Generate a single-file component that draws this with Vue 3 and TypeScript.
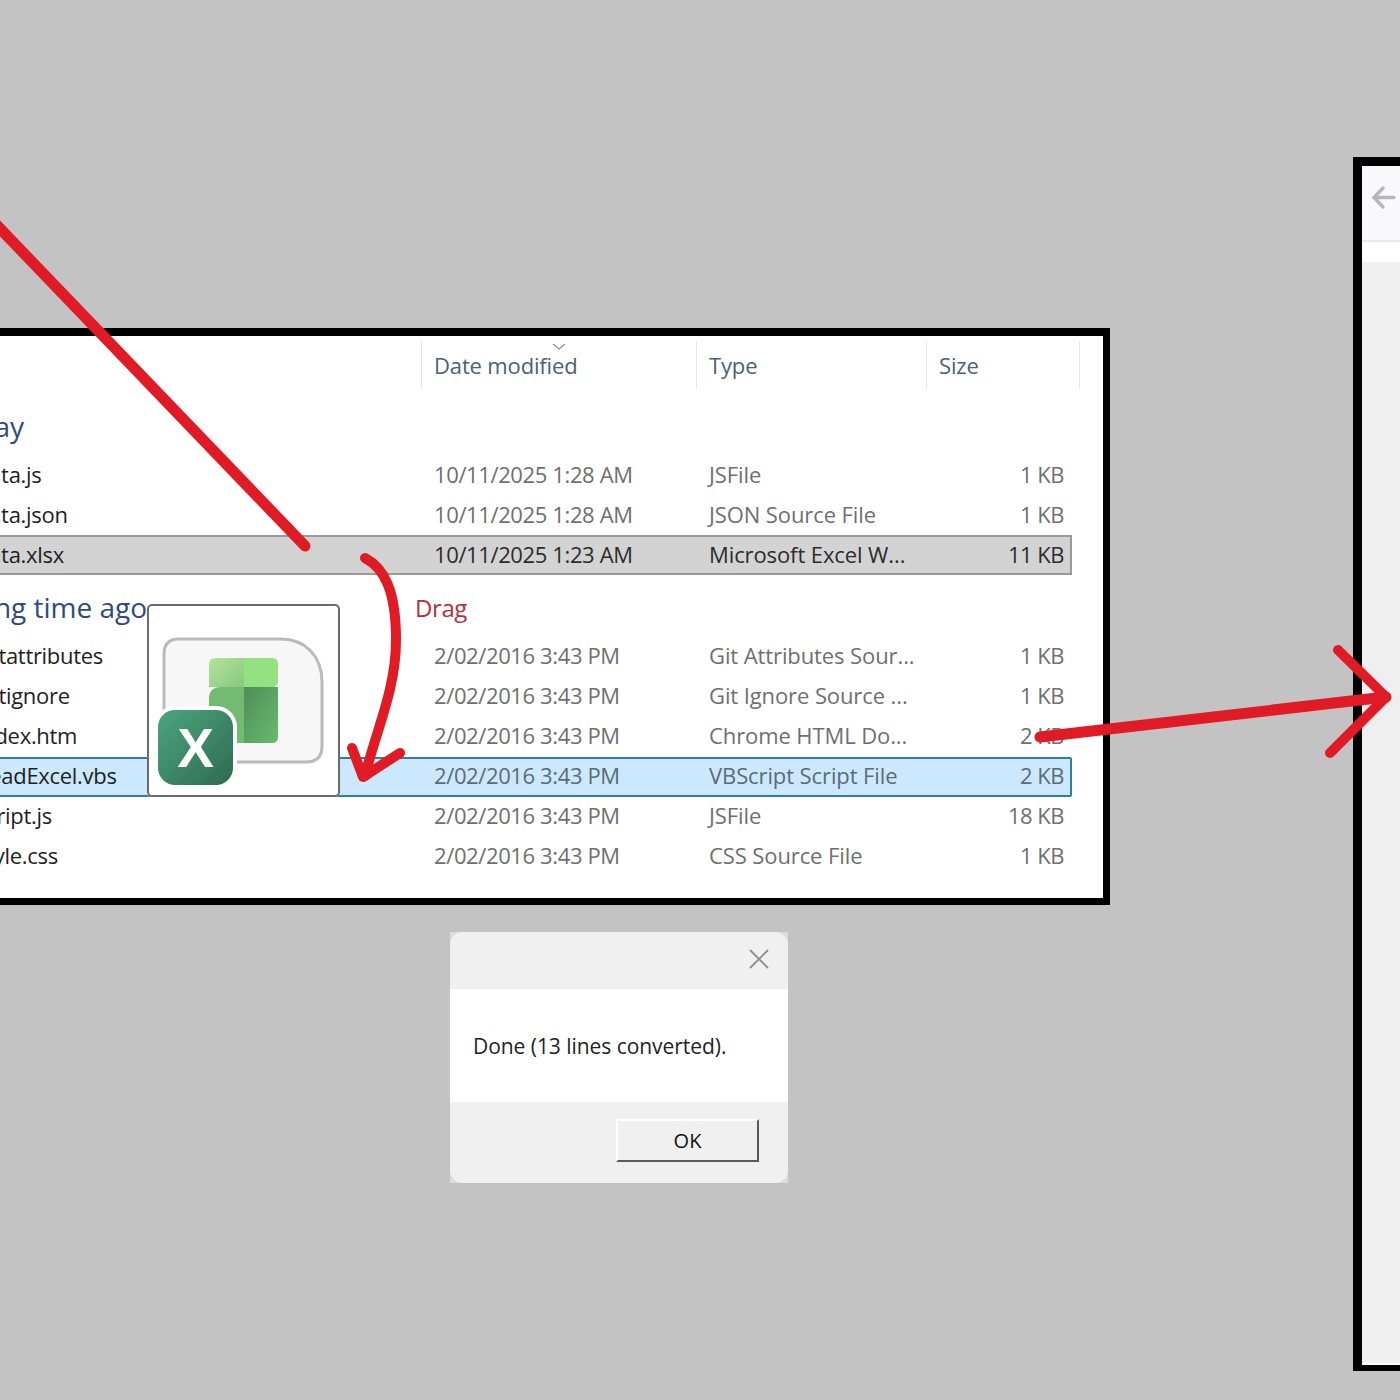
<script setup lang="ts">
interface FileRow {
  name: string
  date: string
  type: string
  size: string
  state?: 'grey' | 'blue'
}

interface FileGroup {
  title: string
  rows: FileRow[]
}

const groups: FileGroup[] = [
  {
    title: 'Today',
    rows: [
      { name: 'data.js', date: '10/11/2025 1:28 AM', type: 'JSFile', size: '1 KB' },
      { name: 'data.json', date: '10/11/2025 1:28 AM', type: 'JSON Source File', size: '1 KB' },
      { name: 'data.xlsx', date: '10/11/2025 1:23 AM', type: 'Microsoft Excel W...', size: '11 KB', state: 'grey' },
    ],
  },
  {
    title: 'A long time ago',
    rows: [
      { name: '.gitattributes', date: '2/02/2016 3:43 PM', type: 'Git Attributes Sour...', size: '1 KB' },
      { name: '.gitignore', date: '2/02/2016 3:43 PM', type: 'Git Ignore Source ...', size: '1 KB' },
      { name: 'index.htm', date: '2/02/2016 3:43 PM', type: 'Chrome HTML Do...', size: '2 KB' },
      { name: 'ReadExcel.vbs', date: '2/02/2016 3:43 PM', type: 'VBScript Script File', size: '2 KB', state: 'blue' },
      { name: 'script.js', date: '2/02/2016 3:43 PM', type: 'JSFile', size: '18 KB' },
      { name: 'style.css', date: '2/02/2016 3:43 PM', type: 'CSS Source File', size: '1 KB' },
    ],
  },
]
</script>

<template>
  <div class="stage">
    <!-- explorer window, runs off the left edge -->
    <div class="explorer">
      <div class="head">
        <div class="head-cell first"></div>
        <div class="head-cell date">
          Date modified
          <svg class="chevron" width="14" height="7" viewBox="0 0 14 7">
            <path d="M1 1 L7 6 L13 1" fill="none" stroke="#8a8f98" stroke-width="1.2" />
          </svg>
        </div>
        <div class="head-cell type">Type</div>
        <div class="head-cell size">Size</div>
      </div>
      <div class="list">
        <section v-for="g in groups" :key="g.title" class="group">
          <h3 class="group-title">{{ g.title }}</h3>
          <div
            v-for="r in g.rows"
            :key="r.name"
            class="row"
            :class="r.state"
          >
            <span class="name">{{ r.name }}</span>
            <span class="meta date-col">{{ r.date }}</span>
            <span class="meta type-col">{{ r.type }}</span>
            <span class="meta right">{{ r.size }}</span>
          </div>
        </section>
      </div>
    </div>

    <!-- drag ghost -->
    <div class="ghost">
      <svg width="193" height="193" viewBox="0 0 193 193">
        <defs>
          <linearGradient id="sheetA" x1="0" y1="0" x2="1" y2="1">
            <stop offset="0" stop-color="#b4e49a" />
            <stop offset="1" stop-color="#86c97c" />
          </linearGradient>
          <linearGradient id="sheetB" x1="0" y1="0" x2="1" y2="1">
            <stop offset="0" stop-color="#4f8d5a" />
            <stop offset="1" stop-color="#69bb6e" />
          </linearGradient>
          <linearGradient id="badge" x1="0" y1="0" x2="1" y2="1">
            <stop offset="0" stop-color="#4aa67f" />
            <stop offset="1" stop-color="#2f6a50" />
          </linearGradient>
        </defs>
        <path
          d="M32 35 H134 C158 35 175 52 175 78 V142 Q175 158 159 158 H32 Q17 158 17 143 V50 Q17 35 32 35 Z"
          fill="#f7f7f7"
          stroke="#bababa"
          stroke-width="3"
        />
        <path d="M62 60 Q62 54 68 54 H97 V83 H62 Z" fill="url(#sheetA)" />
        <path d="M97 54 H125 Q131 54 131 60 V77 Q131 83 125 83 H97 Z" fill="#93e27f" />
        <path d="M62 95 Q62 83 74 83 H97 V139 H62 Z" fill="#72bb70" />
        <path d="M97 83 H131 V133 Q131 139 125 139 H97 Z" fill="url(#sheetB)" />
        <rect x="7" y="102" width="83" height="83" rx="21" fill="#fff" />
        <rect x="11" y="106" width="75" height="75" rx="17" fill="url(#badge)" />
        <text x="48.5" y="163" text-anchor="middle" class="badge-x">X</text>
      </svg>
    </div>

    <div class="drag-label">Drag</div>

    <!-- message box -->
    <div class="dialog">
      <div class="dialog-inner">
        <div class="dialog-top">
          <svg width="22" height="22" viewBox="0 0 22 22">
            <path d="M2 2 L20 20 M20 2 L2 20" stroke="#8e8e8e" stroke-width="1.8" fill="none" />
          </svg>
        </div>
        <div class="dialog-body">Done (13 lines converted).</div>
        <div class="dialog-foot">
          <button class="ok">OK</button>
        </div>
      </div>
    </div>

    <!-- second window, cut by the right edge -->
    <div class="browser">
      <div class="browser-bar">
        <svg width="25" height="25" viewBox="0 0 25 25">
          <path d="M23 12.5 H3.5 M12 3 L3 12.5 L12 22" fill="none" stroke="#b5b5ba" stroke-width="3.4" stroke-linecap="round" />
        </svg>
      </div>
      <div class="browser-gap"></div>
      <div class="browser-body"></div>
    </div>

    <!-- red annotations -->
    <svg class="marks" width="1400" height="1400" viewBox="0 0 1400 1400">
      <g fill="none" stroke="#e01b26" stroke-linecap="round" stroke-linejoin="round">
        <path d="M-12 216 L305 546" stroke-width="11" />
        <path d="M365 558 C384 568 396 590 396 640 C396 690 376 730 365 776" stroke-width="10" />
        <path d="M352 748 L363 777 L400 753" stroke-width="10" />
        <path d="M1040 737 L1386 697" stroke-width="11" />
        <path d="M1338 650 L1386 697 L1330 753" stroke-width="10" />
      </g>
    </svg>
  </div>
</template>

<style scoped>
.stage {
  position: relative;
  width: 1400px;
  height: 1400px;
  overflow: hidden;
  background: #c3c3c3;
  font-family: "Open Sans", "Noto Sans", sans-serif;
}

.explorer {
  position: absolute;
  left: -80px;
  top: 328px;
  width: 1190px;
  box-sizing: border-box;
  border: 7px solid #000;
  border-top-width: 8px;
  background: #fff;
  padding-top: 5px;
}

.head {
  display: grid;
  grid-template-columns: 495px 275px 230px 153px;
  height: 48px;
}

.head-cell {
  position: relative;
  display: flex;
  align-items: center;
  padding-left: 12px;
  border-right: 1px solid #e5e5e5;
  font-size: 22px;
  letter-spacing: -0.15px;
  color: #4c607a;
}

.chevron {
  position: absolute;
  left: 130px;
  top: 2px;
}

.list {
  padding: 18px 31px 21px 0;
}

.group + .group {
  margin-top: 12px;
}

.group-title {
  height: 40px;
  margin: 0 0 8px;
  padding-left: 18px;
  line-height: 38px;
  font-size: 28px;
  font-weight: 400;
  color: #2f4a85;
}

.group + .group .group-title {
  margin-bottom: 10px;
  line-height: 40px;
}

.row {
  display: grid;
  grid-template-columns: 507px 275px 1fr 140px;
  align-items: center;
  height: 40px;
  box-sizing: border-box;
  padding-bottom: 3px;
  font-size: 22px;
  white-space: nowrap;
}

.group + .group .row {
  padding-bottom: 5px;
}

.row.grey {
  background: #d3d3d3;
  outline: 2px solid #9a9a9a;
  outline-offset: -2px;
}

.row.blue {
  background: #cce8ff;
  outline: 2px solid #2f7ea0;
  outline-offset: -2px;
  border-radius: 2px;
}

.name {
  padding-left: 49px;
  letter-spacing: -0.3px;
  color: #1e1e1e;
}

.meta {
  color: #6f6f6f;
}

.date-col {
  letter-spacing: -0.38px;
}

.type-col {
  letter-spacing: -0.1px;
}

.row.grey .meta {
  color: #2c2c2c;
}

.row.blue .meta {
  color: #5b6b78;
}

.right {
  text-align: right;
  padding-right: 8px;
  letter-spacing: -0.5px;
}

.ghost {
  position: absolute;
  left: 147px;
  top: 604px;
  width: 193px;
  height: 193px;
  box-sizing: border-box;
  background: #fff;
  outline: 2px solid #6a6a6a;
  outline-offset: -2px;
  border-radius: 5px;
}

.ghost svg {
  display: block;
}

.badge-x {
  font-family: "Liberation Sans", sans-serif;
  font-weight: 700;
  font-size: 55px;
  fill: #fff;
}

.drag-label {
  position: absolute;
  left: 415px;
  top: 592px;
  font-size: 24px;
  line-height: 32px;
  letter-spacing: -0.4px;
  color: #b5313c;
}

.dialog {
  position: absolute;
  left: 450px;
  top: 932px;
  width: 338px;
  height: 251px;
  background: #dcdcdc;
}

.dialog-inner {
  display: flex;
  flex-direction: column;
  height: 100%;
  border-radius: 13px;
  overflow: hidden;
  background: #f0f0f0;
}

.dialog-top {
  display: flex;
  justify-content: flex-end;
  align-items: flex-start;
  height: 57px;
  box-sizing: border-box;
  padding: 16px 18px 0 0;
}

.dialog-body {
  display: flex;
  align-items: center;
  height: 113px;
  padding-left: 23px;
  background: #fff;
  font-size: 21px;
  letter-spacing: -0.05px;
  color: #222;
}

.dialog-foot {
  flex: 1;
  display: flex;
  justify-content: flex-end;
  align-items: flex-start;
  padding: 17px 29px 0 0;
}

.ok {
  width: 143px;
  height: 43px;
  padding: 0;
  box-sizing: border-box;
  background: #f0f0f0;
  border: 2px solid;
  border-color: #fff #5a5a5a #5a5a5a #fff;
  font-family: inherit;
  font-size: 20px;
  color: #111;
}

.browser {
  position: absolute;
  left: 1353px;
  top: 157px;
  width: 60px;
  height: 1214px;
  box-sizing: border-box;
  display: flex;
  flex-direction: column;
  border: solid #000;
  border-width: 9px 0 6px 9px;
  background: #fff;
}

.browser-bar {
  height: 76px;
  padding: 19px 0 0 9px;
  box-sizing: border-box;
  background: #f9f9fc;
  border-bottom: 2px solid #e8e8ec;
}

.browser-bar svg {
  display: block;
}

.browser-gap {
  height: 20px;
}

.browser-body {
  flex: 1;
  margin-bottom: 2px;
  background: #efefef;
}

.marks {
  position: absolute;
  left: 0;
  top: 0;
  pointer-events: none;
}
</style>
